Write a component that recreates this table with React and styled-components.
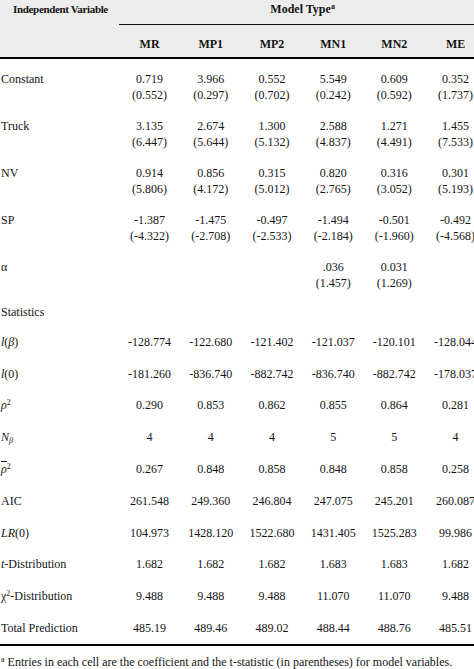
import styled, { createGlobalStyle } from "styled-components";

const GlobalStyle = createGlobalStyle`
  html, body {
    margin: 0;
    padding: 0;
    background: #fff;
  }
`;

const pad = {
  pair: "12px 0 3px",
  section: "10px 0 6px",
  single: "7.9px 0",
};

const Page = styled.div`
  width: 474px;
  height: 669px;
  overflow: hidden;
  background: #fff;
  font-family: "Liberation Serif", "Times New Roman", serif;
  font-size: 12px;
  line-height: 16px;
  color: #141414;
`;

const Table = styled.table`
  width: 486px;
  border-collapse: collapse;
  table-layout: fixed;
`;

const LabelCol = styled.col`
  width: 119px;
`;

const ValueCol = styled.col`
  width: 61.2px;
`;

const HeadBase = styled.th`
  background: #ececec;
  font-weight: bold;
  white-space: nowrap;
`;

const VariableHead = styled(HeadBase)`
  vertical-align: top;
  text-align: center;
  padding: 1px 0 0 2px;
  font-size: 11px;
  letter-spacing: -0.35px;
  border-bottom: 2px solid #000;
`;

const GroupHead = styled(HeadBase)`
  text-align: center;
  padding: 1px 0 7px;
  border-bottom: 1px solid #111;
`;

const ModelHead = styled(HeadBase)`
  text-align: center;
  padding: 11px 0 5px;
  border-bottom: 2px solid #000;
`;

const Label = styled.td`
  text-align: left;
  vertical-align: top;
  white-space: nowrap;
  padding: ${(p) => pad[p.$kind]};
  padding-left: 1px;
  border-bottom: ${(p) => (p.$last ? "2px solid #000" : "none")};
`;

const Cell = styled.td`
  text-align: center;
  vertical-align: top;
  white-space: nowrap;
  padding: ${(p) => pad[p.$kind]};
  border-bottom: ${(p) => (p.$last ? "2px solid #000" : "none")};
`;

const Line = styled.span`
  display: block;
  min-height: 16px;
`;

const I = styled.i`
  font-style: italic;
`;

const Sup = styled.sup`
  font-size: 8px;
  line-height: 0;
  vertical-align: 0.5em;
`;

const Sub = styled.sub`
  font-size: 8px;
  line-height: 0;
  vertical-align: -0.25em;
  font-style: italic;
`;

const Bar = styled.span`
  text-decoration: overline;
`;

const Footnote = styled.p`
  margin: 0;
  padding: 8px 0 0 1px;
  white-space: nowrap;
`;

const models = ["MR", "MP1", "MP2", "MN1", "MN2", "ME"];

const variables = [
  ["Constant", ["0.719", "3.966", "0.552", "5.549", "0.609", "0.352"], ["(0.552)", "(0.297)", "(0.702)", "(0.242)", "(0.592)", "(1.737)"]],
  ["Truck", ["3.135", "2.674", "1.300", "2.588", "1.271", "1.455"], ["(6.447)", "(5.644)", "(5.132)", "(4.837)", "(4.491)", "(7.533)"]],
  ["NV", ["0.914", "0.856", "0.315", "0.820", "0.316", "0.301"], ["(5.806)", "(4.172)", "(5.012)", "(2.765)", "(3.052)", "(5.193)"]],
  ["SP", ["-1.387", "-1.475", "-0.497", "-1.494", "-0.501", "-0.492"], ["(-4.322)", "(-2.708)", "(-2.533)", "(-2.184)", "(-1.960)", "(-4.568)"]],
  ["α", ["", "", "", ".036", "0.031", ""], ["", "", "", "(1.457)", "(1.269)", ""]],
];

const statistics = [
  [<><I>l</I>(<I>β</I>)</>, ["-128.774", "-122.680", "-121.402", "-121.037", "-120.101", "-128.044"]],
  [<><I>l</I>(0)</>, ["-181.260", "-836.740", "-882.742", "-836.740", "-882.742", "-178.037"]],
  [<><I>ρ</I><Sup>2</Sup></>, ["0.290", "0.853", "0.862", "0.855", "0.864", "0.281"]],
  [<><I>N</I><Sub>β</Sub></>, ["4", "4", "4", "5", "5", "4"]],
  [<><Bar><I>ρ</I></Bar><Sup>2</Sup></>, ["0.267", "0.848", "0.858", "0.848", "0.858", "0.258"]],
  ["AIC", ["261.548", "249.360", "246.804", "247.075", "245.201", "260.087"]],
  [<><I>LR</I>(0)</>, ["104.973", "1428.120", "1522.680", "1431.405", "1525.283", "99.986"]],
  [<><I>t</I>-Distribution</>, ["1.682", "1.682", "1.682", "1.683", "1.683", "1.682"]],
  [<>χ<Sup>2</Sup>-Distribution</>, ["9.488", "9.488", "9.488", "11.070", "11.070", "9.488"]],
  ["Total Prediction", ["485.19", "489.46", "489.02", "488.44", "488.76", "485.51"]],
];

export default function App() {
  return (
    <Page>
      <GlobalStyle />
      <Table>
        <colgroup>
          <LabelCol />
          {models.map((m) => (
            <ValueCol key={m} />
          ))}
        </colgroup>
        <thead>
          <tr>
            <VariableHead rowSpan={2}>Independent Variable</VariableHead>
            <GroupHead colSpan={6}>
              Model Type<Sup>a</Sup>
            </GroupHead>
          </tr>
          <tr>
            {models.map((m) => (
              <ModelHead key={m}>{m}</ModelHead>
            ))}
          </tr>
        </thead>
        <tbody>
          {variables.map(([label, coef, tstat]) => (
            <tr key={label}>
              <Label $kind="pair">{label}</Label>
              {coef.map((c, i) => (
                <Cell key={i} $kind="pair">
                  <Line>{c}</Line>
                  <Line>{tstat[i]}</Line>
                </Cell>
              ))}
            </tr>
          ))}
          <tr>
            <Label $kind="section">Statistics</Label>
            {models.map((m) => (
              <Cell key={m} $kind="section" />
            ))}
          </tr>
          {statistics.map(([label, values], r) => (
            <tr key={r}>
              <Label $kind="single" $last={r === statistics.length - 1}>
                {label}
              </Label>
              {values.map((v, i) => (
                <Cell key={i} $kind="single" $last={r === statistics.length - 1}>
                  {v}
                </Cell>
              ))}
            </tr>
          ))}
        </tbody>
      </Table>
      <Footnote>
        <Sup>a</Sup> Entries in each cell are the coefficient and the t-statistic (in parentheses) for model
        variables.
      </Footnote>
    </Page>
  );
}
